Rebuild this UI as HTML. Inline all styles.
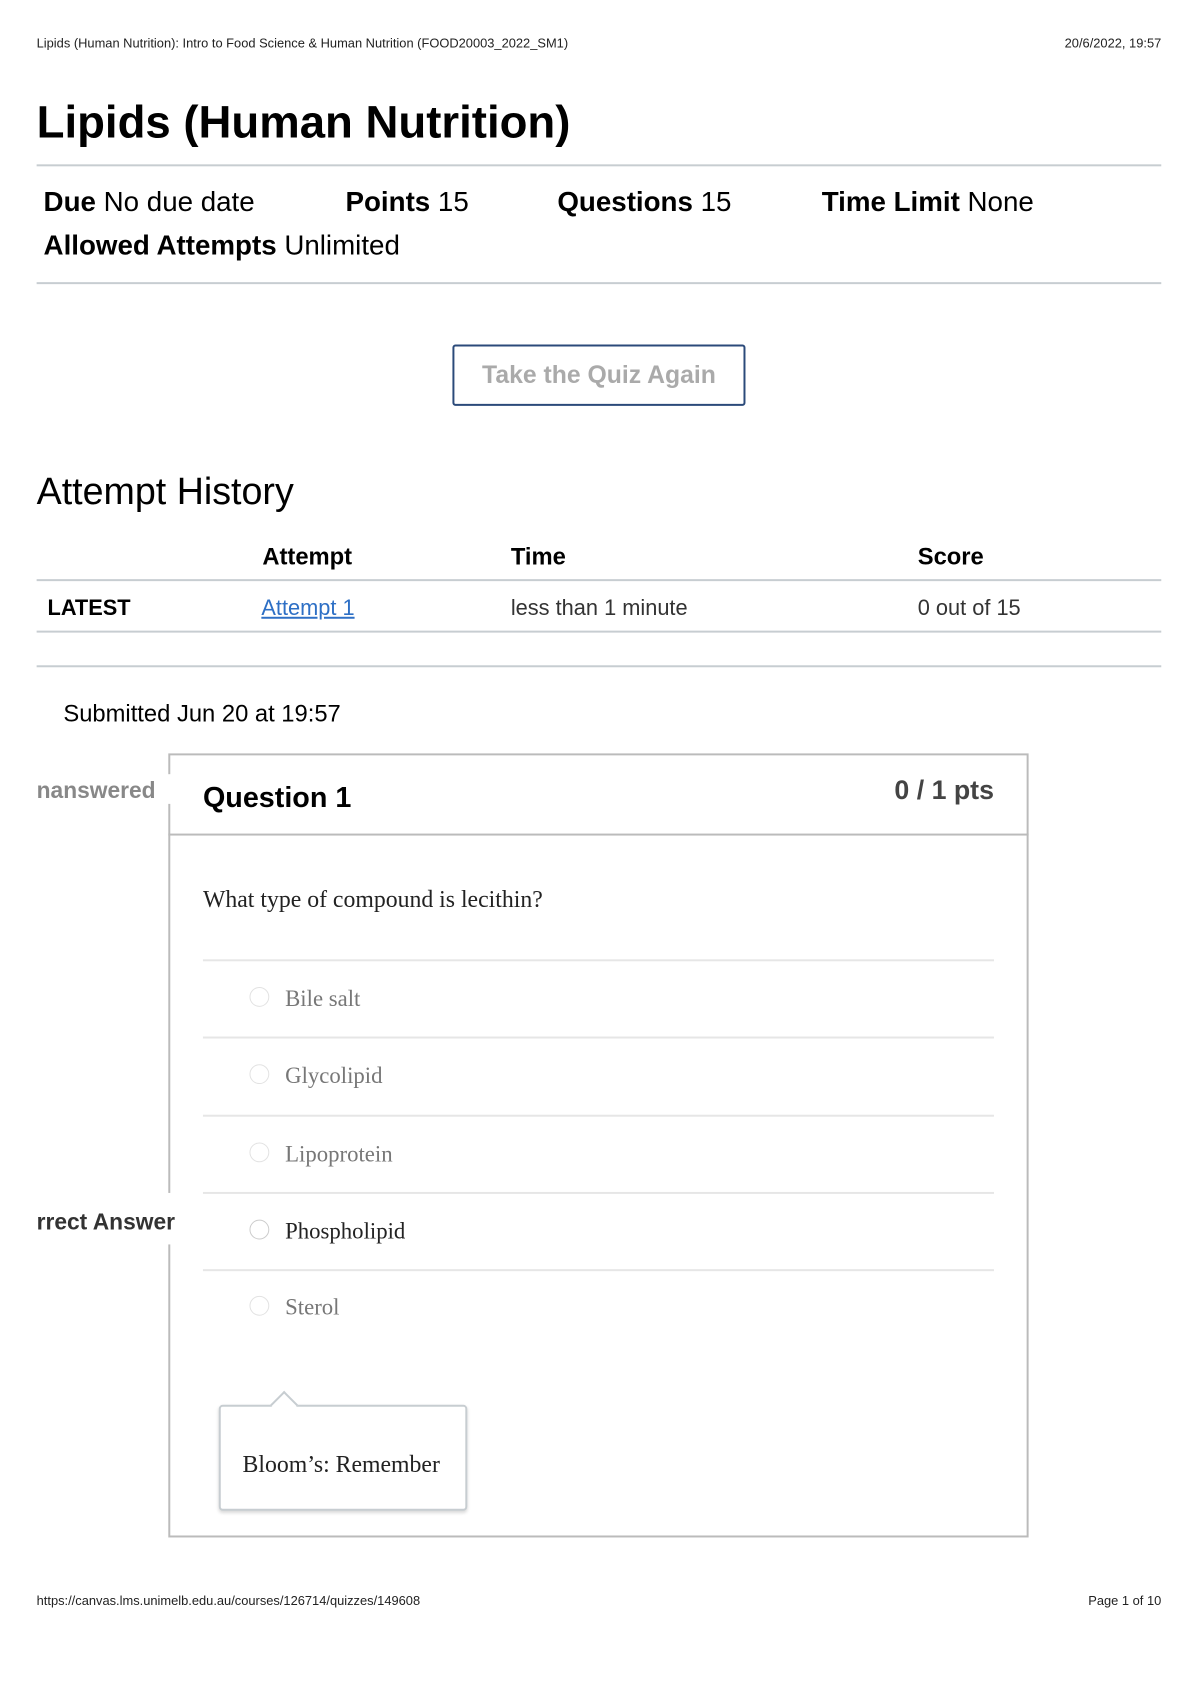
<!DOCTYPE html>
<html><head><meta charset="utf-8"><style>
*{margin:0;padding:0;box-sizing:border-box}
body{width:1200px;height:1696px;background:#fff;font-family:"Liberation Sans",sans-serif;color:#000;position:relative;overflow:hidden}
#w{position:absolute;left:0;top:0;width:1200px;height:1696px;transform:scale(0.99);transform-origin:0 0}
.a{position:absolute;white-space:nowrap}
.hr{position:absolute;left:37px;width:1136px;height:2px;background:#c7cdd1}
.meta{font-size:28px;line-height:1}
.meta b{font-weight:bold}
.th{font-size:24px;font-weight:bold}
.td{font-size:22px}
.serif{font-family:"Liberation Serif",serif}
.sep{position:absolute;left:205px;width:799px;height:2px;background:#e6e6e6}
.radio{position:absolute;left:252px;width:20px;height:20px;border:1px solid #e2e2e2;border-radius:50%}
.opt{position:absolute;left:288px;font-size:23px;color:#777;font-family:"Liberation Serif",serif}
</style></head><body><div id="w">
<div class="a" style="left:37px;top:36px;font-size:13px;color:#222">Lipids (Human Nutrition): Intro to Food Science &amp; Human Nutrition (FOOD20003_2022_SM1)</div>
<div class="a" style="right:27px;top:36px;font-size:13px;color:#222">20/6/2022, 19:57</div>
<div class="a" style="left:37px;top:96px;font-size:46px;font-weight:bold">Lipids (Human Nutrition)</div>
<div class="hr" style="top:166px"></div>
<div class="a meta" style="left:44px;top:190px"><b>Due</b> No due date</div>
<div class="a meta" style="left:349px;top:190px"><b>Points</b> 15</div>
<div class="a meta" style="left:563px;top:190px"><b>Questions</b> 15</div>
<div class="a meta" style="left:830px;top:190px"><b>Time Limit</b> None</div>
<div class="a meta" style="left:44px;top:234px"><b>Allowed Attempts</b> Unlimited</div>
<div class="hr" style="top:285px"></div>
<div class="a" style="left:457px;top:348px;width:296px;height:62px;border:2px solid #2b4a7a;border-radius:3px;text-align:center;line-height:58px;font-size:25px;font-weight:bold;color:#aaa">Take the Quiz Again</div>
<div class="a" style="left:37px;top:476px;font-size:38px">Attempt History</div>
<div class="a th" style="left:265px;top:549px">Attempt</div>
<div class="a th" style="left:516px;top:549px">Time</div>
<div class="a th" style="left:927px;top:549px">Score</div>
<div class="hr" style="top:585px"></div>
<div class="a td" style="left:48px;top:601px;font-weight:bold">LATEST</div>
<div class="a td" style="left:264px;top:601px;color:#2d6fc5;text-decoration:underline">Attempt 1 </div>
<div class="a td" style="left:516px;top:601px;color:#333">less than 1 minute</div>
<div class="a td" style="left:927px;top:601px;color:#333">0 out of 15</div>
<div class="hr" style="top:637px"></div>
<div class="hr" style="top:672px"></div>
<div class="a" style="left:64px;top:708px;font-size:24px">Submitted Jun 20 at 19:57</div>
<div class="a" style="left:170px;top:761px;width:869px;height:792px;border:2px solid #bbb"></div>
<div class="a" style="left:170px;top:842px;width:869px;height:2px;background:#bbb"></div>
<div class="a" style="left:168px;top:782px;width:6px;height:30px;background:#fff"></div>
<div class="a" style="left:168px;top:1205px;width:6px;height:52px;background:#fff"></div>
<div class="a" style="left:37px;top:785px;font-size:23px;font-weight:bold;color:#888">nanswered</div>
<div class="a" style="left:37px;top:1221px;font-size:23px;font-weight:bold;color:#333">rrect Answer</div>
<div class="a" style="left:205px;top:790px;font-size:29px;font-weight:bold">Question 1</div>
<div class="a" style="right:196px;top:783px;font-size:27px;font-weight:bold;color:#444">0 / 1 pts</div>
<div class="a serif" style="left:205px;top:896px;font-size:24px;color:#222">What type of compound is lecithin?</div>
<div class="sep" style="top:969px"></div>
<div class="sep" style="top:1047px"></div>
<div class="sep" style="top:1126px"></div>
<div class="sep" style="top:1204px"></div>
<div class="sep" style="top:1282px"></div>
<div class="radio" style="top:997px"></div><div class="opt" style="top:996px">Bile salt</div>
<div class="radio" style="top:1075px"></div><div class="opt" style="top:1074px">Glycolipid</div>
<div class="radio" style="top:1154px"></div><div class="opt" style="top:1153px">Lipoprotein</div>
<div class="radio" style="top:1232px;border-color:#ccc"></div><div class="opt" style="top:1231px;color:#222">Phospholipid</div>
<div class="radio" style="top:1309px"></div><div class="opt" style="top:1308px">Sterol</div>
<div class="a" style="left:221px;top:1419px;width:251px;height:107px;border:2px solid #c7cdd1;border-radius:4px;box-shadow:0 2px 3px rgba(0,0,0,.15);background:#fff"></div>
<div class="a" style="left:277px;top:1409px;width:20px;height:20px;border-left:2px solid #c7cdd1;border-top:2px solid #c7cdd1;transform:rotate(45deg);background:#fff"></div>
<div class="a serif" style="left:245px;top:1467px;font-size:24px;color:#222">Bloom’s: Remember</div>
<div class="a" style="left:37px;top:1609px;font-size:13px;color:#222">https://canvas.lms.unimelb.edu.au/courses/126714/quizzes/149608</div>
<div class="a" style="right:27px;top:1609px;font-size:13px;color:#222">Page 1 of 10</div>
</div></body></html>
